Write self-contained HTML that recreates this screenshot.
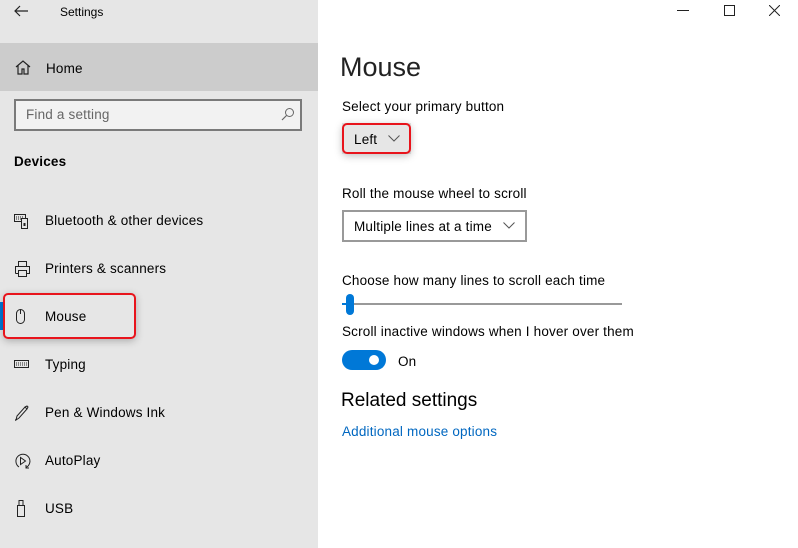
<!DOCTYPE html>
<html><head><meta charset="utf-8"><style>
*{margin:0;padding:0;box-sizing:border-box}
body{width:798px;height:548px;overflow:hidden;font-family:"Liberation Sans",sans-serif;background:#fff;position:relative;color:#000}
.side{position:absolute;left:0;top:0;width:318px;height:548px;background:#e6e6e6}
.abs{position:absolute}
.t{font-size:13.5px;white-space:nowrap;letter-spacing:.18px}
.item{position:absolute;left:14px;font-size:13.5px;letter-spacing:.18px}
.item svg{position:absolute;left:0;top:-1px}
.item span{position:absolute;left:31px;top:0;white-space:nowrap}
.red{position:absolute;border:2px solid #e8141c;border-radius:5px;box-shadow:0 2px 8px rgba(0,0,0,.25)}
</style></head><body>
<div class="side">
 <svg class="abs" style="left:13px;top:5px" width="16" height="12" viewBox="0 0 16 12"><path d="M15 6H2M7 1L2 6l5 5" fill="none" stroke="#222" stroke-width="1.2"/></svg>
 <div class="abs" style="left:60px;top:5px;font-size:12px">Settings</div>
 <div class="abs" style="left:0;top:43px;width:318px;height:48px;background:#cccccc"></div>
 <svg class="abs" style="left:15px;top:60px" width="16" height="15" viewBox="0 0 16 15"><path d="M1 7L8 1l7 6M3 5.5V14h4V9h2v5h4V5.5" fill="none" stroke="#222" stroke-width="1.2"/></svg>
 <div class="abs t" style="left:46px;top:61px">Home</div>
 <div class="abs" style="left:14px;top:99px;width:288px;height:32px;border:2px solid #7a7a7a;background:#f2f2f2"></div>
 <div class="abs t" style="left:26px;top:107px;color:#666">Find a setting</div>
 <svg class="abs" style="left:281px;top:107px" width="14" height="14" viewBox="0 0 14 14"><circle cx="8.5" cy="5.5" r="4" fill="none" stroke="#666" stroke-width="1"/><path d="M5.5 8.5L1 13" stroke="#666" stroke-width="1.2"/></svg>
 <div class="abs t" style="left:14px;top:154px;font-weight:bold">Devices</div>

 <div class="item" style="top:213px"><svg width="18" height="18" viewBox="0 0 18 18"><rect x="0.5" y="2.5" width="11" height="7" fill="none" stroke="#222"/><path d="M2 5h8M2 7h8" stroke="#222" stroke-dasharray="1 1"/><rect x="7.5" y="6.5" width="6" height="10" fill="#e6e6e6" stroke="#222"/><rect x="9.5" y="11" width="2" height="3" fill="#222"/></svg><span>Bluetooth &amp; other devices</span></div>
 <div class="item" style="top:261px"><svg width="18" height="18" viewBox="0 0 18 18"><path d="M4.5 6V1.5h8V6M1.5 13.5V6.5h14v7h-3M4.5 13.5h-3" fill="none" stroke="#222"/><rect x="4.5" y="10.5" width="8" height="6" fill="none" stroke="#222"/></svg><span>Printers &amp; scanners</span></div>
 <div class="abs" style="left:0;top:302px;width:3px;height:28px;background:#0078d7"></div>
 <div class="red" style="left:3px;top:293px;width:133px;height:46px"></div>
 <div class="item" style="top:309px"><svg width="18" height="18" viewBox="0 0 18 18"><rect x="2.5" y="1.5" width="8" height="14" rx="4" fill="none" stroke="#222"/><path d="M6.5 2v4" stroke="#222"/></svg><span>Mouse</span></div>
 <div class="item" style="top:357px"><svg width="18" height="18" viewBox="0 0 18 18"><rect x="0.5" y="4.5" width="14" height="7" fill="none" stroke="#222"/><path d="M2 7h11M2 9h11" stroke="#222" stroke-dasharray="1 1"/></svg><span>Typing</span></div>
 <div class="item" style="top:405px"><svg width="18" height="18" viewBox="0 0 18 18"><path d="M2 16l1-4 8-9 2 2-8 9zM11 3l2-1 1 1-1 2M1 16c1 0 2-1 2-1" fill="none" stroke="#222"/></svg><span>Pen &amp; Windows Ink</span></div>
 <div class="item" style="top:453px"><svg width="18" height="18" viewBox="0 0 18 18"><path d="M5 15A7 7 0 1 1 12 15.5" fill="none" stroke="#222"/><path d="M12 13v3h3" fill="none" stroke="#222"/><path d="M6.5 5.5v7l5-3.5z" fill="none" stroke="#222"/></svg><span>AutoPlay</span></div>
 <div class="item" style="top:501px"><svg width="18" height="18" viewBox="0 0 18 18"><rect x="3.5" y="5.5" width="7" height="11" fill="none" stroke="#222"/><rect x="5" y="0.5" width="4" height="5" fill="none" stroke="#222"/></svg><span>USB</span></div>
</div>

<svg class="abs" style="left:677px;top:10px" width="12" height="2"><rect width="12" height="1" fill="#222"/></svg>
<svg class="abs" style="left:724px;top:5px" width="11" height="11"><rect x="0.5" y="0.5" width="10" height="10" fill="none" stroke="#222"/></svg>
<svg class="abs" style="left:769px;top:5px" width="11" height="11"><path d="M0 0L11 11M11 0L0 11" stroke="#222"/></svg>

<div class="abs" style="left:340px;top:52px;font-size:27px;color:#222">Mouse</div>
<div class="abs t" style="left:342px;top:99px">Select your primary button</div>
<div class="abs" style="left:342px;top:123px;width:69px;height:31px;background:#e6e6e6"></div>
<div class="red" style="left:342px;top:123px;width:69px;height:31px"></div>
<div class="abs t" style="left:354px;top:132px">Left</div>
<svg class="abs" style="left:388px;top:135px" width="12" height="7"><path d="M0.5 0.5L6 6l5.5-5.5" fill="none" stroke="#555"/></svg>

<div class="abs t" style="left:342px;top:186px">Roll the mouse wheel to scroll</div>
<div class="abs" style="left:342px;top:210px;width:185px;height:32px;border:2px solid #999"></div>
<div class="abs t" style="left:354px;top:219px">Multiple lines at a time</div>
<svg class="abs" style="left:503px;top:222px" width="12" height="7"><path d="M0.5 0.5L6 6l5.5-5.5" fill="none" stroke="#555"/></svg>

<div class="abs t" style="left:342px;top:273px">Choose how many lines to scroll each time</div>
<div class="abs" style="left:342px;top:303px;width:280px;height:2px;background:#999"></div>
<div class="abs" style="left:342px;top:303px;width:8px;height:2px;background:#0078d7"></div>
<div class="abs" style="left:346px;top:294px;width:8px;height:21px;border-radius:4px;background:#0078d7"></div>

<div class="abs t" style="left:342px;top:324px">Scroll inactive windows when I hover over them</div>
<div class="abs" style="left:342px;top:350px;width:44px;height:20px;border-radius:10px;background:#0078d7"></div>
<div class="abs" style="left:369px;top:355px;width:10px;height:10px;border-radius:5px;background:#fff"></div>
<div class="abs t" style="left:398px;top:354px">On</div>

<div class="abs" style="left:341px;top:390px;font-size:19px">Related settings</div>
<div class="abs t" style="left:342px;top:424px;color:#0067c0">Additional mouse options</div>
</body></html>
